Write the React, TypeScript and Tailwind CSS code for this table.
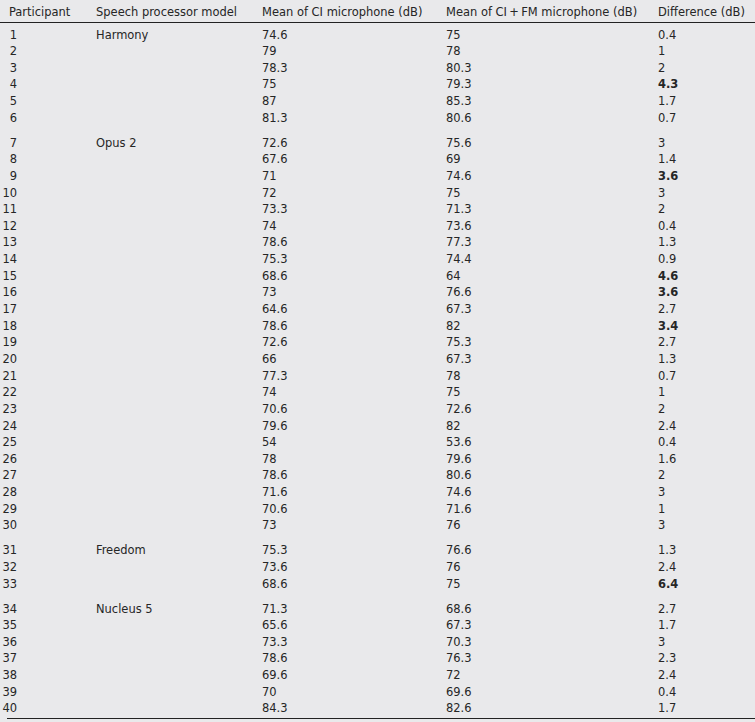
type Row = {
  id: number;
  model?: string;
  ci: string;
  fm: string;
  diff: string;
  bold?: boolean;
};

const groups: Row[][] = [
  [
    { id: 1, model: "Harmony", ci: "74.6", fm: "75", diff: "0.4" },
    { id: 2, ci: "79", fm: "78", diff: "1" },
    { id: 3, ci: "78.3", fm: "80.3", diff: "2" },
    { id: 4, ci: "75", fm: "79.3", diff: "4.3", bold: true },
    { id: 5, ci: "87", fm: "85.3", diff: "1.7" },
    { id: 6, ci: "81.3", fm: "80.6", diff: "0.7" },
  ],
  [
    { id: 7, model: "Opus 2", ci: "72.6", fm: "75.6", diff: "3" },
    { id: 8, ci: "67.6", fm: "69", diff: "1.4" },
    { id: 9, ci: "71", fm: "74.6", diff: "3.6", bold: true },
    { id: 10, ci: "72", fm: "75", diff: "3" },
    { id: 11, ci: "73.3", fm: "71.3", diff: "2" },
    { id: 12, ci: "74", fm: "73.6", diff: "0.4" },
    { id: 13, ci: "78.6", fm: "77.3", diff: "1.3" },
    { id: 14, ci: "75.3", fm: "74.4", diff: "0.9" },
    { id: 15, ci: "68.6", fm: "64", diff: "4.6", bold: true },
    { id: 16, ci: "73", fm: "76.6", diff: "3.6", bold: true },
    { id: 17, ci: "64.6", fm: "67.3", diff: "2.7" },
    { id: 18, ci: "78.6", fm: "82", diff: "3.4", bold: true },
    { id: 19, ci: "72.6", fm: "75.3", diff: "2.7" },
    { id: 20, ci: "66", fm: "67.3", diff: "1.3" },
    { id: 21, ci: "77.3", fm: "78", diff: "0.7" },
    { id: 22, ci: "74", fm: "75", diff: "1" },
    { id: 23, ci: "70.6", fm: "72.6", diff: "2" },
    { id: 24, ci: "79.6", fm: "82", diff: "2.4" },
    { id: 25, ci: "54", fm: "53.6", diff: "0.4" },
    { id: 26, ci: "78", fm: "79.6", diff: "1.6" },
    { id: 27, ci: "78.6", fm: "80.6", diff: "2" },
    { id: 28, ci: "71.6", fm: "74.6", diff: "3" },
    { id: 29, ci: "70.6", fm: "71.6", diff: "1" },
    { id: 30, ci: "73", fm: "76", diff: "3" },
  ],
  [
    { id: 31, model: "Freedom", ci: "75.3", fm: "76.6", diff: "1.3" },
    { id: 32, ci: "73.6", fm: "76", diff: "2.4" },
    { id: 33, ci: "68.6", fm: "75", diff: "6.4", bold: true },
  ],
  [
    { id: 34, model: "Nucleus 5", ci: "71.3", fm: "68.6", diff: "2.7" },
    { id: 35, ci: "65.6", fm: "67.3", diff: "1.7" },
    { id: 36, ci: "73.3", fm: "70.3", diff: "3" },
    { id: 37, ci: "78.6", fm: "76.3", diff: "2.3" },
    { id: 38, ci: "69.6", fm: "72", diff: "2.4" },
    { id: 39, ci: "70", fm: "69.6", diff: "0.4" },
    { id: 40, ci: "84.3", fm: "82.6", diff: "1.7" },
  ],
];

// column grid: participant | model | CI | CI+FM | difference
const cols = "grid grid-cols-[96px_166px_184px_212px_1fr]";

export default function App() {
  return (
    <div className="min-h-[722px] w-[755px] bg-[#e9e9eb] font-['DejaVu_Sans_Condensed','DejaVu_Sans',sans-serif] text-[12.75px] text-[#262626]">
      <div className={`${cols} h-[23px] items-center border-b-[1.5px] border-[#222] pt-[1px]`}>
        <div className="pl-[9px]">Participant</div>
        <div>Speech processor model</div>
        <div>Mean of CI microphone (dB)</div>
        <div>Mean of CI{"\u2009+\u2009"}FM microphone (dB)</div>
        <div>Difference (dB)</div>
      </div>

      <div className="ml-[7px] flex flex-col gap-[8.3px] border-b-[1.5px] border-[#222] pt-[3.5px] pb-[1px]">
        {groups.map((group, gi) => (
          <div key={gi}>
            {group.map((row) => (
              <div key={row.id} className={`${cols} -ml-[7px] h-[16.65px] items-center leading-[16.65px]`}>
                <div className="w-[17px] text-right">{row.id}</div>
                <div>{row.model ?? ""}</div>
                <div>{row.ci}</div>
                <div>{row.fm}</div>
                <div className={row.bold ? "font-bold" : ""}>{row.diff}</div>
              </div>
            ))}
          </div>
        ))}
      </div>
    </div>
  );
}
